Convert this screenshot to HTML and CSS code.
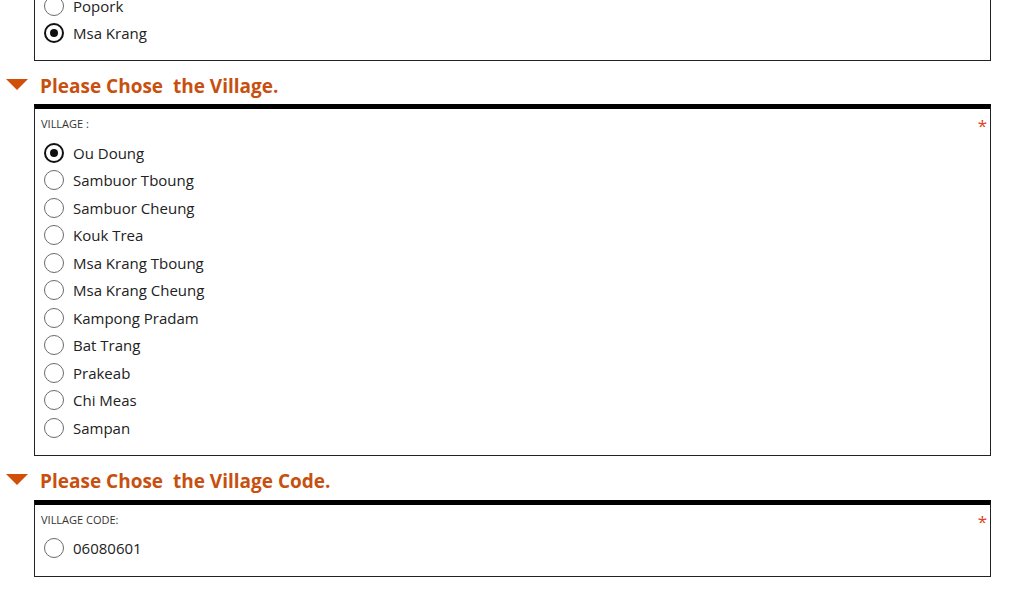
FILE: index.html
```html
<!DOCTYPE html>
<html>
<head>
<meta charset="utf-8">
<link rel="stylesheet" href="styles.css">
</head>
<body>
<div class="page">
  <div class="box box-partial">
    <div class="opt"><span class="radio"></span><span class="opt-text">Popork</span></div>
    <div class="opt"><span class="radio checked"></span><span class="opt-text">Msa Krang</span></div>
  </div>

  <div class="heading"><span class="tri"></span><span class="heading-text">Please Chose &nbsp;the Village.</span></div>
  <div class="box">
    <div class="label-row"><span class="label">VILLAGE :</span><span class="req">*</span></div>
    <div class="opt"><span class="radio checked"></span><span class="opt-text">Ou Doung</span></div>
    <div class="opt"><span class="radio"></span><span class="opt-text">Sambuor Tboung</span></div>
    <div class="opt"><span class="radio"></span><span class="opt-text">Sambuor Cheung</span></div>
    <div class="opt"><span class="radio"></span><span class="opt-text">Kouk Trea</span></div>
    <div class="opt"><span class="radio"></span><span class="opt-text">Msa Krang Tboung</span></div>
    <div class="opt"><span class="radio"></span><span class="opt-text">Msa Krang Cheung</span></div>
    <div class="opt"><span class="radio"></span><span class="opt-text">Kampong Pradam</span></div>
    <div class="opt"><span class="radio"></span><span class="opt-text">Bat Trang</span></div>
    <div class="opt"><span class="radio"></span><span class="opt-text">Prakeab</span></div>
    <div class="opt"><span class="radio"></span><span class="opt-text">Chi Meas</span></div>
    <div class="opt"><span class="radio"></span><span class="opt-text">Sampan</span></div>
  </div>

  <div class="heading heading-2"><span class="tri"></span><span class="heading-text">Please Chose &nbsp;the Village Code.</span></div>
  <div class="box box-last">
    <div class="label-row"><span class="label">VILLAGE CODE:</span><span class="req">*</span></div>
    <div class="opt"><span class="radio"></span><span class="opt-text">06080601</span></div>
  </div>
</div>
</body>
</html>
```
FILE: styles.css
```css
* { box-sizing: border-box; }
html, body { margin: 0; padding: 0; background: #fff; }
body {
  font-family: "Open Sans", "Noto Sans", sans-serif;
  color: #222;
  width: 1024px;
  height: 600px;
  overflow: hidden;
}
.page { margin-top: -8px; }

.box {
  margin: 0 33px 0 34px;
  border: 1px solid #222;
  border-top: 5px solid #000;
  padding: 8px 0 13px 9px;
}
.box-partial {
  border-top: none;
  padding-top: 0;
  padding-bottom: 13px;
}
.box-last {
  padding-bottom: 14px;
}

.heading {
  display: flex;
  align-items: center;
  height: 43px;
  padding: 13px 0 6px 6px;
}
.heading-2 {
  height: 44px;
  padding-bottom: 7px;
}
.tri {
  width: 0;
  height: 0;
  border-left: 11px solid transparent;
  border-right: 11px solid transparent;
  border-top: 11px solid #d24f0a;
  margin-right: 12px;
  margin-top: -3px;
}
.heading-text {
  font-size: 19px;
  font-weight: 700;
  color: #c8500f;
  line-height: 24px;
}

.label-row {
  display: flex;
  justify-content: space-between;
  align-items: flex-start;
  height: 14px;
  margin-bottom: 8px;
}
.label {
  font-size: 11px;
  line-height: 14px;
  color: #333;
  margin-left: -3px;
}
.req {
  color: #e0401c;
  font-size: 17px;
  line-height: 14px;
  margin-right: 3px;
  margin-top: 2px;
}

.opt {
  display: flex;
  align-items: center;
  height: 27.5px;
}
.radio {
  width: 20px;
  height: 20px;
  border: 1px solid #6b6b6b;
  border-radius: 50%;
  margin-right: 9px;
  position: relative;
  flex: none;
}
.radio.checked {
  border: 2px solid #111;
}
.radio.checked::after {
  content: "";
  position: absolute;
  left: 4px;
  top: 4px;
  width: 8px;
  height: 8px;
  border-radius: 50%;
  background: #111;
}
.opt-text {
  font-size: 15px;
  line-height: 20px;
  color: #222;
}
```
